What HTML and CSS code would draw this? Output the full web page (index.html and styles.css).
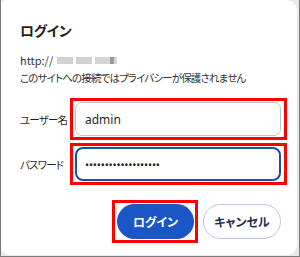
FILE: index.html
```html
<!DOCTYPE html>
<html lang="ja">
<head>
<meta charset="utf-8">
<link rel="stylesheet" href="styles.css">
</head>
<body>
<div class="frame">
  <div class="dialog">
    <h1 class="title">ログイン</h1>
    <div class="url">http://<span class="blur b1"></span><span class="blur b2"></span><span class="blur b3"></span></div>
    <div class="msg">このサイトへの接続ではプライバシーが保護されません</div>
    <div class="form">
      <label class="label">ユーザー名</label>
      <div class="hl"><div class="input">admin</div></div>
      <label class="label">パスワード</label>
      <div class="hl"><div class="input focus"><span class="dots">•••••••••••••••••••</span></div></div>
    </div>
    <div class="actions">
      <div class="hl hl-btn"><button class="btn primary">ログイン</button></div>
      <button class="btn secondary">キャンセル</button>
    </div>
  </div>
</div>
</body>
</html>
```
FILE: styles.css
```css
* { box-sizing: border-box; }
html, body { margin: 0; padding: 0; background: #fff; }
body {
  font-family: "Noto Sans CJK JP", "Noto Sans", sans-serif;
  font-feature-settings: "palt";
  color: #202124;
}
.frame {
  width: 300px;
  height: 257px;
  background: #e9e9e9;
  border: 1px solid #7a7a7a;
  border-top: none;
  overflow: hidden;
}
.dialog {
  width: 297px;
  height: 255px;
  margin-left: -1px;
  background: #fff;
  border-radius: 6px 10px 10px 10px;
  padding: 20px 0 0 20px;
}
.title {
  margin: 0;
  font-size: 14px;
  line-height: 20px;
  font-weight: 700;
  letter-spacing: -0.4px;
  color: #1f1f1f;
}
.url {
  margin-top: 11px;
  font-size: 11px;
  line-height: 18px;
  color: #333;
  display: flex;
  align-items: center;
}
.blur {
  display: inline-block;
  height: 7px;
  background: #d2d2d2;
  margin-left: 3px;
}
.b1 { width: 16px; margin-left: 4px; }
.b2 { width: 16px; }
.b3 { width: 22px; background: linear-gradient(90deg, #d6d6d6 70%, #9a9a9a 70%, #9a9a9a 85%, #d6d6d6 85%); }
.msg {
  font-size: 10.5px;
  line-height: 18px;
  letter-spacing: -0.85px;
  color: #333;
  white-space: nowrap;
}
.form {
  margin-top: 11px;
  display: grid;
  grid-template-columns: 50px 217px;
  row-gap: 3px;
  align-items: center;
}
.label {
  font-size: 10.5px;
  letter-spacing: -0.8px;
  white-space: nowrap;
  color: #1f1f1f;
}
.hl {
  border: 3px solid #ff0000;
  padding: 1px 3px 1px 2px;
}
.input {
  height: 34px;
  border: 1px solid #c4c4c4;
  border-radius: 7px;
  padding-left: 9px;
  display: flex;
  align-items: center;
  font-family: "Noto Sans", sans-serif;
  font-size: 12px;
  color: #1f1f1f;
}
.input.focus {
  border: 2px solid #1d4fa8;
  border-radius: 8px;
  padding-left: 8px;
}
.dots {
  font-size: 11px;
  letter-spacing: -0.2px;
  color: #1f1f1f;
}
.actions {
  margin-top: 15px;
  width: 261px;
  display: flex;
  justify-content: flex-end;
  align-items: center;
  gap: 5px;
}
.hl-btn { padding: 1px 1px 1px 2px; }
.btn {
  height: 35px;
  border-radius: 18px;
  font-family: "Noto Sans CJK JP", sans-serif;
  font-feature-settings: "palt";
  font-size: 12px;
  font-weight: 700;
  display: block;
}
.primary {
  width: 77px;
  background: #1b56c6;
  border: none;
  color: #fff;
}
.secondary {
  width: 78px;
  background: #fff;
  border: 1px solid #b6c6e6;
  color: #1f3050;
}
```
